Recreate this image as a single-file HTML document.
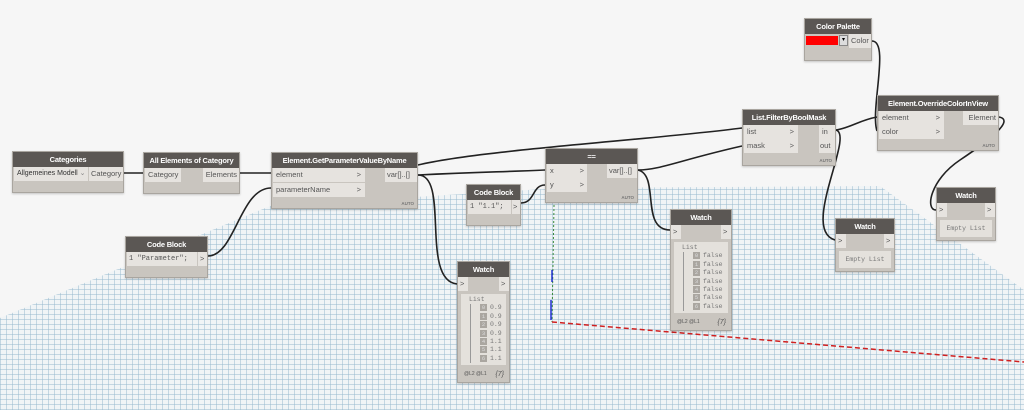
<!DOCTYPE html>
<html><head><meta charset="utf-8"><style>
*{margin:0;padding:0;box-sizing:border-box}
body{width:1024px;height:410px;overflow:hidden;background:#f6f6f6;font-family:"Liberation Sans",sans-serif;position:relative}
.grid{position:absolute;left:0;top:0;width:1024px;height:410px;
clip-path:polygon(0 318px,270px 206px,560px 188px,880px 186px,1024px 290px,1024px 410px,0 410px);
background:
repeating-linear-gradient(90deg,rgba(150,185,205,.5) 0 1px,transparent 1px 6px),
repeating-linear-gradient(0deg,rgba(150,185,205,.5) 0 1px,transparent 1px 5px),#f0f4f6}
.n{position:absolute;background:#c9c5bf;border:1px solid #a9a59f;box-shadow:0 1px 2px rgba(0,0,0,.2)}
.h{background:#5b5754;color:#fff;font-weight:bold;font-size:7.5px;letter-spacing:-0.2px;text-align:center;height:15px;line-height:15px;white-space:nowrap;overflow:hidden}
.r{position:absolute;height:14px;line-height:14px;font-size:7.5px;color:#555;background:#e6e3df;padding:0 3px;white-space:nowrap;overflow:hidden}
.a{position:absolute;right:3px;bottom:2px;font-size:4.5px;color:#777;font-weight:bold}
.m{font-family:"Liberation Mono",monospace}
.w{position:absolute;background:#e4e1dc;font-family:"Liberation Mono",monospace;font-size:6.5px;color:#777}
.li{height:8.4px;line-height:8.4px;white-space:nowrap}
.ix{display:inline-block;background:#aaa6a0;color:#ddd;width:7px;height:7px;line-height:7px;text-align:center;margin-right:3px;font-size:5.5px}
</style></head><body>
<div class="grid"></div>
<svg width="1024" height="410" style="position:absolute;left:0;top:0">
<g fill="none" stroke="#222" stroke-width="1.6">
<path d="M124 173 L143 173"/>
<path d="M240 173 L271 173"/>
<path d="M208 256 C235 256 240 188 271 188"/>
<path d="M418 165 C480 150 650 140 742 128"/>
<path d="M418 175 C450 175 420 280 457 284"/>
<path d="M418 175 C480 172 500 172 545 170"/>
<path d="M521 203 C535 203 532 185 545 185"/>
<path d="M638 170 C660 170 680 160 742 146"/>
<path d="M638 170 C660 175 640 230 670 230"/>
<path d="M836 130 C850 128 860 120 877 117"/>
<path d="M836 130 C855 135 800 230 835 240"/>
<path d="M872 41 C890 41 870 110 877 131"/>
<path d="M999 117 C1015 120 990 140 960 160 C930 180 925 210 936 210"/>
</g>
<line x1="554" y1="205" x2="552" y2="322" stroke="#3a8a3a" stroke-dasharray="2,2" stroke-width="1"/>
<line x1="552" y1="322" x2="1024" y2="362" stroke="#d02020" stroke-dasharray="5,3" stroke-width="1.5"/>
<line x1="552" y1="270" x2="552" y2="282" stroke="#2030d0" stroke-width="1.5"/>
<line x1="551" y1="300" x2="551" y2="320" stroke="#2030d0" stroke-width="1.5"/>
</svg>

<div class="n" style="left:12px;top:151px;width:112px;height:42px"><div class="h">Categories</div>
<div class="r" style="left:1px;top:15px;width:74px;color:#333;font-size:7px">Allgemeines Modell <span style="color:#888">⌄</span></div>
<div class="r" style="left:76px;top:15px;width:34px;text-align:right;padding:0 2px">Category</div></div>

<div class="n" style="left:143px;top:152px;width:97px;height:42px"><div class="h">All Elements of Category</div>
<div class="r" style="left:1px;top:15px;width:36px">Category</div>
<div class="r" style="left:59px;top:15px;width:36px;text-align:right;padding:0 2px">Elements</div></div>

<div class="n" style="left:271px;top:152px;width:147px;height:57px"><div class="h">Element.GetParameterValueByName</div>
<div class="r" style="left:1px;top:15px;width:92px">element<span style="position:absolute;right:4px">&gt;</span></div>
<div class="r" style="left:1px;top:30px;width:92px">parameterName<span style="position:absolute;right:4px">&gt;</span></div>
<div class="r" style="left:113px;top:15px;width:32px;padding:0 2px">var[]..[]</div><div class="a">AUTO</div></div>

<div class="n" style="left:125px;top:236px;width:83px;height:42px"><div class="h">Code Block</div>
<div class="r m" style="left:1px;top:15px;width:70px;font-size:7px;padding:0 2px">1 "Parameter";</div>
<div class="r" style="left:72px;top:15px;width:9px;padding:0 2px">&gt;</div></div>

<div class="n" style="left:466px;top:184px;width:55px;height:42px"><div class="h">Code Block</div>
<div class="r m" style="left:1px;top:15px;width:43px;font-size:7px;padding:0 2px">1 "1.1";</div>
<div class="r" style="left:45px;top:15px;width:8px;padding:0 1px">&gt;</div></div>

<div class="n" style="left:545px;top:148px;width:93px;height:55px"><div class="h">==</div>
<div class="r" style="left:1px;top:15px;width:40px">x<span style="position:absolute;right:3px">&gt;</span></div>
<div class="r" style="left:1px;top:29px;width:40px">y<span style="position:absolute;right:3px">&gt;</span></div>
<div class="r" style="left:61px;top:15px;width:30px;padding:0 2px">var[]..[]</div><div class="a">AUTO</div></div>

<div class="n" style="left:457px;top:261px;width:53px;height:122px"><div class="h">Watch</div>
<div class="r" style="left:0;top:15px;width:10px;padding:0 2px">&gt;</div><div class="r" style="right:0;top:15px;width:10px;padding:0 2px">&gt;</div>
<div class="w" style="left:3px;top:32px;width:45px;height:71px;padding:2px 0 0 8px">
<div class="li">List</div>
<div style="padding-left:9px;border-left:1px solid #999;margin-left:1px">
<div class="li"><span class="ix">0</span>0.9</div><div class="li"><span class="ix">1</span>0.9</div><div class="li"><span class="ix">2</span>0.9</div><div class="li"><span class="ix">3</span>0.9</div><div class="li"><span class="ix">4</span>1.1</div><div class="li"><span class="ix">5</span>1.1</div><div class="li"><span class="ix">6</span>1.1</div></div></div>
<div style="position:absolute;left:6px;bottom:5px;font-size:5px;color:#555">@L2 @L1</div><div style="position:absolute;right:5px;bottom:4px;font-size:7px;color:#555;font-style:italic">{7}</div></div>

<div class="n" style="left:670px;top:209px;width:62px;height:122px"><div class="h">Watch</div>
<div class="r" style="left:0;top:15px;width:10px;padding:0 2px">&gt;</div><div class="r" style="right:0;top:15px;width:10px;padding:0 2px">&gt;</div>
<div class="w" style="left:3px;top:32px;width:54px;height:71px;padding:2px 0 0 8px">
<div class="li">List</div>
<div style="padding-left:9px;border-left:1px solid #999;margin-left:1px">
<div class="li"><span class="ix">0</span>false</div><div class="li"><span class="ix">1</span>false</div><div class="li"><span class="ix">2</span>false</div><div class="li"><span class="ix">3</span>false</div><div class="li"><span class="ix">4</span>false</div><div class="li"><span class="ix">5</span>false</div><div class="li"><span class="ix">6</span>false</div></div></div>
<div style="position:absolute;left:6px;bottom:5px;font-size:5px;color:#555">@L2 @L1</div><div style="position:absolute;right:5px;bottom:4px;font-size:7px;color:#555;font-style:italic">{7}</div></div>

<div class="n" style="left:742px;top:109px;width:94px;height:57px"><div class="h">List.FilterByBoolMask</div>
<div class="r" style="left:1px;top:15px;width:54px">list<span style="position:absolute;right:4px">&gt;</span></div>
<div class="r" style="left:1px;top:29px;width:54px">mask<span style="position:absolute;right:4px">&gt;</span></div>
<div class="r" style="left:76px;top:15px;width:16px">in</div>
<div class="r" style="left:76px;top:29px;width:16px;padding:0 1px">out</div><div class="a">AUTO</div></div>

<div class="n" style="left:804px;top:18px;width:68px;height:43px"><div class="h">Color Palette</div>
<div style="position:absolute;left:1px;top:17px;width:32px;height:9px;background:#f00"></div>
<div style="position:absolute;left:34px;top:16px;width:9px;height:11px;background:#ddd;border:1px solid #888;font-size:6px;text-align:center;line-height:9px">▾</div>
<div class="r" style="left:44px;top:15px;width:22px;padding:0 2px">Color</div></div>

<div class="n" style="left:877px;top:95px;width:122px;height:56px"><div class="h">Element.OverrideColorInView</div>
<div class="r" style="left:1px;top:15px;width:65px">element<span style="position:absolute;right:4px">&gt;</span></div>
<div class="r" style="left:1px;top:29px;width:65px">color<span style="position:absolute;right:4px">&gt;</span></div>
<div class="r" style="left:85px;top:15px;width:35px;text-align:right;padding:0 2px">Element</div><div class="a">AUTO</div></div>

<div class="n" style="left:835px;top:218px;width:60px;height:54px"><div class="h">Watch</div>
<div class="r" style="left:0;top:15px;width:10px;padding:0 2px">&gt;</div><div class="r" style="right:0;top:15px;width:10px;padding:0 2px">&gt;</div>
<div class="w" style="left:3px;top:32px;width:52px;height:17px;text-align:center;line-height:17px;font-size:6.5px">Empty List</div></div>

<div class="n" style="left:936px;top:187px;width:60px;height:54px"><div class="h">Watch</div>
<div class="r" style="left:0;top:15px;width:10px;padding:0 2px">&gt;</div><div class="r" style="right:0;top:15px;width:10px;padding:0 2px">&gt;</div>
<div class="w" style="left:3px;top:32px;width:52px;height:17px;text-align:center;line-height:17px;font-size:6.5px">Empty List</div></div>
</body></html>
